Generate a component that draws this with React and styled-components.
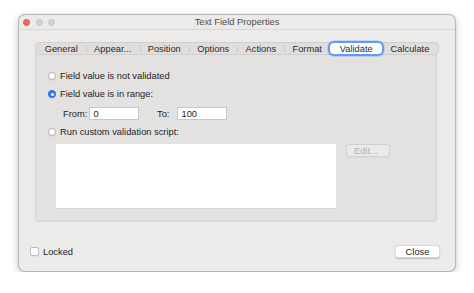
import React from "react";
import styled, { createGlobalStyle } from "styled-components";

const Global = createGlobalStyle`
  html, body { margin: 0; padding: 0; background: #ffffff; }
  body { font-family: "Liberation Sans", Arial, sans-serif; -webkit-font-smoothing: antialiased; }
`;

const Stage = styled.div`
  padding: 14px 0 0 18px;
`;

const Window = styled.div`
  width: 438px;
  height: 258px;
  box-sizing: border-box;
  background: #ecebea;
  border-radius: 7px;
  border: 0.5px solid rgba(0, 0, 0, 0.22);
  box-shadow: 0 3px 10px rgba(0, 0, 0, 0.18), 0 0 2px rgba(0, 0, 0, 0.1);
  display: flex;
  flex-direction: column;
  overflow: hidden;
`;

const TitleBar = styled.div`
  height: 16px;
  border-bottom: 1px solid #d8d7d6;
  display: grid;
  grid-template-columns: 1fr auto 1fr;
  align-items: center;
  padding: 0 4px;
`;

const Lights = styled.div`
  display: flex;
  gap: 5.5px;
  align-items: center;
`;

const Light = styled.span`
  width: 7px;
  height: 7px;
  border-radius: 50%;
  box-sizing: border-box;
  background: ${(p) => (p.$red ? "#ee6a5f" : "#d4d3d2")};
  border: 0.5px solid ${(p) => (p.$red ? "#d85a50" : "#c6c5c4")};
`;

const Title = styled.div`
  font-size: 9.3px;
  color: #4b4b4b;
`;

const Content = styled.div`
  padding: 12px 18px 13px 16px;
  display: flex;
  flex-direction: column;
  flex: 1;
`;

const TabView = styled.div`
  display: flex;
  flex-direction: column;
`;

const TabBar = styled.div`
  align-self: center;
  display: flex;
  height: 13px;
  background: #dfdedd;
  border: 0.5px solid #d0cfce;
  border-radius: 4px;
  box-sizing: border-box;
  position: relative;
  z-index: 1;
  margin-bottom: -6px;
  margin-left: 2px;
`;

const Tab = styled.div`
  position: relative;
  padding: 0 8.2px;
  font-size: 9.3px;
  line-height: 12px;
  color: #2b2b2b;
  white-space: nowrap;
  ${(p) =>
    p.$active
      ? `
    background: #ffffff;
    border-radius: 4px;
    box-shadow: 0 0 0 2px #5d9bf4, 0 0 0 2.8px rgba(93,155,244,0.35);
    padding: 0 9.7px;
  `
      : ""}
  ${(p) =>
    p.$sep
      ? `
    &::before {
      content: "";
      position: absolute;
      left: 0;
      top: 3px;
      height: 7px;
      width: 1px;
      background: #cbcac9;
    }
  `
      : ""}
`;

const Panel = styled.div`
  height: 173px;
  box-sizing: border-box;
  background: #e3e2e1;
  border: 1px solid #d6d5d4;
  border-radius: 3px;
  box-shadow: inset -4px -4px 0 -3px #dcdbda;
  padding: 20px 13px 0 12px;
  display: flex;
  flex-direction: column;
`;

const RadioRow = styled.label`
  display: flex;
  align-items: center;
  gap: 4px;
  height: 12px;
  font-size: 9.3px;
  color: #232323;
  margin-bottom: ${(p) => p.$mb || 0}px;
`;

const Radio = styled.span`
  width: 8px;
  height: 8px;
  border-radius: 50%;
  box-sizing: border-box;
  display: flex;
  align-items: center;
  justify-content: center;
  background: ${(p) => (p.$on ? "#2f7cf6" : "#ffffff")};
  border: 0.5px solid ${(p) => (p.$on ? "#2a6fe0" : "#b9b8b7")};
  box-shadow: 0 0.5px 0.5px rgba(0, 0, 0, 0.12);
  &::after {
    content: "";
    width: 3px;
    height: 3px;
    border-radius: 50%;
    background: ${(p) => (p.$on ? "#ffffff" : "transparent")};
  }
`;

const RangeRow = styled.div`
  display: flex;
  align-items: center;
  height: 13px;
  padding-left: 15px;
  margin-bottom: 6px;
  font-size: 9.3px;
  color: #232323;
`;

const RangeLabel = styled.span`
  width: ${(p) => p.$w}px;
`;

const Field = styled.div`
  width: 50px;
  height: 13px;
  box-sizing: border-box;
  background: #ffffff;
  border: 0.5px solid #c9c8c7;
  padding-left: 3.5px;
  font-size: 9.3px;
  line-height: 12px;
  color: #232323;
  margin-right: 18px;
`;

const ScriptRow = styled.div`
  display: flex;
  align-items: flex-start;
  gap: 10px;
  padding-left: 8px;
`;

const ScriptBox = styled.div`
  width: 280px;
  height: 65px;
  background: #ffffff;
  border-bottom: 1px solid #d6d5d4;
  box-sizing: border-box;
`;

const EditButton = styled.div`
  width: 44px;
  height: 13px;
  box-sizing: border-box;
  border-radius: 3px;
  background: #eaeae9;
  border: 0.5px solid #d2d1d0;
  box-shadow: 0 0.5px 0.5px rgba(0, 0, 0, 0.06);
  font-size: 9.3px;
  line-height: 12px;
  color: #b3b2b1;
  padding-left: 7px;
`;

const Footer = styled.div`
  margin-top: 23px;
  height: 13px;
  display: flex;
  align-items: center;
  justify-content: space-between;
  margin-left: -5px;
  margin-right: -3px;
`;

const CheckLabel = styled.label`
  display: flex;
  align-items: center;
  gap: 4px;
  font-size: 9.3px;
  color: #232323;
`;

const Checkbox = styled.span`
  width: 9px;
  height: 9px;
  box-sizing: border-box;
  border-radius: 2px;
  background: #ffffff;
  border: 0.5px solid #bdbcbb;
  box-shadow: 0 0.5px 0.5px rgba(0, 0, 0, 0.1);
`;

const Button = styled.div`
  width: 45px;
  height: 13px;
  box-sizing: border-box;
  border-radius: 3px;
  background: #ffffff;
  border: 0.5px solid rgba(0, 0, 0, 0.14);
  box-shadow: 0 0.5px 1px rgba(0, 0, 0, 0.22);
  font-size: 9.3px;
  line-height: 12px;
  color: #232323;
  text-align: center;
`;

const tabs = ["General", "Appear...", "Position", "Options", "Actions", "Format", "Validate", "Calculate"];
const active = "Validate";

export default function App() {
  const activeIdx = tabs.indexOf(active);
  return (
    <>
      <Global />
      <Stage>
        <Window>
          <TitleBar>
            <Lights>
              <Light $red />
              <Light />
              <Light />
            </Lights>
            <Title>Text Field Properties</Title>
            <span />
          </TitleBar>
          <Content>
            <TabView>
              <TabBar>
                {tabs.map((t, i) => (
                  <Tab
                    key={t}
                    $active={t === active}
                    $sep={i > 0 && i !== activeIdx && i !== activeIdx + 1}
                  >
                    {t}
                  </Tab>
                ))}
              </TabBar>
              <Panel>
                <RadioRow $mb={6}>
                  <Radio />
                  Field value is not validated
                </RadioRow>
                <RadioRow $mb={7}>
                  <Radio $on />
                  Field value is in range:
                </RadioRow>
                <RangeRow>
                  <RangeLabel $w={26}>From:</RangeLabel>
                  <Field>0</Field>
                  <RangeLabel $w={20}>To:</RangeLabel>
                  <Field>100</Field>
                </RangeRow>
                <RadioRow $mb={6}>
                  <Radio />
                  Run custom validation script:
                </RadioRow>
                <ScriptRow>
                  <ScriptBox />
                  <EditButton>Edit...</EditButton>
                </ScriptRow>
              </Panel>
            </TabView>
            <Footer>
              <CheckLabel>
                <Checkbox />
                Locked
              </CheckLabel>
              <Button>Close</Button>
            </Footer>
          </Content>
        </Window>
      </Stage>
    </>
  );
}
